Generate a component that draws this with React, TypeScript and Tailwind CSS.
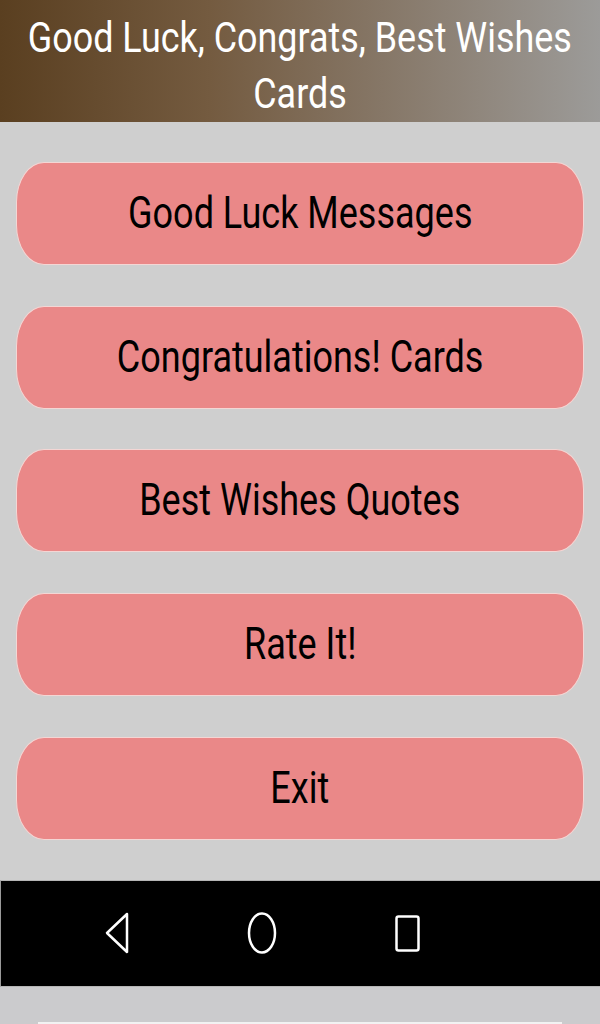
const items = ['Good Luck Messages', 'Congratulations! Cards', 'Best Wishes Quotes', 'Rate It!', 'Exit'];

function Squeezed({ children, className }: { children: React.ReactNode; className?: string }) {
  // the screenshot is squashed horizontally, so text is narrowed the same way
  return (
    <div className="flex justify-center">
      <span className={`inline-block shrink-0 whitespace-nowrap origin-center ${className ?? ''}`}>
        {children}
      </span>
    </div>
  );
}

export default function App() {
  return (
    <div className="w-[600px] h-[1024px] flex flex-col bg-[#cfcfcf] overflow-hidden" style={{ fontFamily: 'Roboto, "Noto Sans", sans-serif' }}>
      <header className="h-[122px] shrink-0 bg-gradient-to-r from-[#5a3f20] via-[#745b40] via-[35%] to-[#9c9b99] flex flex-col justify-center text-white text-[43px] leading-[56px] pt-[8px]">
        <Squeezed className="scale-x-[0.835]">Good Luck, Congrats, Best Wishes</Squeezed>
        <Squeezed className="scale-x-[0.835]">Cards</Squeezed>
      </header>

      <main className="h-[758px] shrink-0 flex flex-col gap-[40.7px] px-4 pt-10">
        {items.map((label) => (
          <button
            key={label}
            className="h-[103px] w-full bg-[#ea8888] border border-[#f4d6d4] rounded-[28px/40px] flex items-center justify-center text-black text-[45px] leading-none"
          >
            <Squeezed className="scale-x-[0.8] pb-[2px]">{label}</Squeezed>
          </button>
        ))}
      </main>

      <nav className="h-[107px] shrink-0 bg-black border-t border-b border-[#b5b5b5] border-l border-l-[#9a9a9a] relative">
        <svg width="600" height="107" viewBox="0 0 600 107" className="absolute left-0 top-0">
          <path d="M126 33 L106 52 L126 71 Z" fill="none" stroke="white" strokeWidth="2.5" strokeLinejoin="round" />
          <ellipse cx="261" cy="52" rx="13" ry="19.5" fill="none" stroke="white" strokeWidth="2.5" />
          <rect x="395.5" y="35.5" width="22" height="34" rx="2" fill="none" stroke="white" strokeWidth="2.5" />
        </svg>
      </nav>

      <div className="flex-1 bg-[#cbcbcd] flex flex-col justify-end items-center">
        <div className="w-[524px] h-[2px] bg-[#f2f2f2]" />
      </div>
    </div>
  );
}
